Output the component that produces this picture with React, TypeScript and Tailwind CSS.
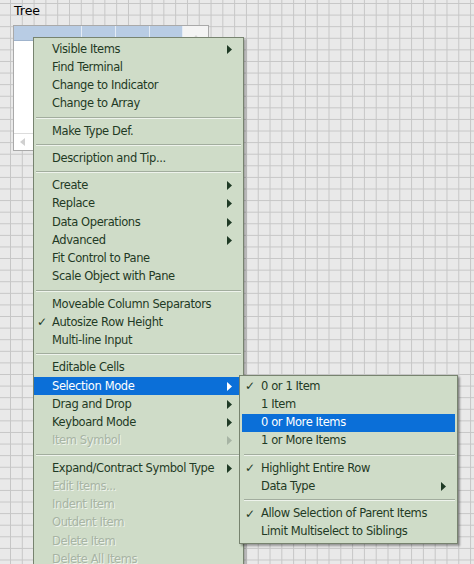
import React from "react";

type MenuEntry =
  | { kind: "sep" }
  | {
      kind: "item";
      label: string;
      checked?: boolean;
      submenu?: boolean;
      disabled?: boolean;
      active?: boolean;
    };

const item = (label: string, opts: Partial<Omit<Extract<MenuEntry, { kind: "item" }>, "kind" | "label">> = {}): MenuEntry => ({
  kind: "item",
  label,
  ...opts,
});
const sep: MenuEntry = { kind: "sep" };

const mainMenu: MenuEntry[] = [
  item("Visible Items", { submenu: true }),
  item("Find Terminal"),
  item("Change to Indicator"),
  item("Change to Array"),
  sep,
  item("Make Type Def."),
  sep,
  item("Description and Tip..."),
  sep,
  item("Create", { submenu: true }),
  item("Replace", { submenu: true }),
  item("Data Operations", { submenu: true }),
  item("Advanced", { submenu: true }),
  item("Fit Control to Pane"),
  item("Scale Object with Pane"),
  sep,
  item("Moveable Column Separators"),
  item("Autosize Row Height", { checked: true }),
  item("Multi-line Input"),
  sep,
  item("Editable Cells"),
  item("Selection Mode", { submenu: true, active: true }),
  item("Drag and Drop", { submenu: true }),
  item("Keyboard Mode", { submenu: true }),
  item("Item Symbol", { submenu: true, disabled: true }),
  sep,
  item("Expand/Contract Symbol Type", { submenu: true }),
  item("Edit Items...", { disabled: true }),
  item("Indent Item", { disabled: true }),
  item("Outdent Item", { disabled: true }),
  item("Delete Item", { disabled: true }),
  item("Delete All Items", { disabled: true }),
];

const selectionMenu: MenuEntry[] = [
  item("0 or 1 Item", { checked: true }),
  item("1 Item"),
  item("0 or More Items", { active: true }),
  item("1 or More Items"),
  sep,
  item("Highlight Entire Row", { checked: true }),
  item("Data Type", { submenu: true }),
  sep,
  item("Allow Selection of Parent Items", { checked: true }),
  item("Limit Multiselect to Siblings"),
];

const Arrow = ({ color }: { color: string }) => (
  <svg width="5" height="9" viewBox="0 0 5 9" className="block">
    <path d="M0 0 L5 4.5 L0 9 Z" fill={color} />
  </svg>
);

const MenuList = ({ entries, textPad, checkPad }: { entries: MenuEntry[]; textPad: string; checkPad: string }) => (
  <>
    {entries.map((e, i) => {
      if (e.kind === "sep") {
        return (
          <div key={i} className="h-[9px] flex items-center px-[2px]">
            <div className="w-full border-t border-t-[#a2ad9e] border-b border-b-[#eef3ec]" />
          </div>
        );
      }
      const textColor = e.active
        ? "text-white"
        : e.disabled
        ? "text-[#a7b4a4] [text-shadow:1px_1px_0_#eef3ec]"
        : "text-[#1f3a25]";
      const arrowColor = e.active ? "#ffffff" : e.disabled ? "#a7b4a4" : "#1f3a25";
      return (
        <div
          key={i}
          className={`relative h-[18.25px] flex items-center mr-[2px] ${e.active ? "bg-[#0b6fd8]" : ""} ${textColor}`}
        >
          {e.checked && <span className={`absolute ${checkPad} text-[12px] leading-none tracking-normal`}>✓</span>}
          <span className={`${textPad} whitespace-nowrap`}>{e.label}</span>
          {e.submenu && (
            <span className="ml-auto mr-[9px]">
              <Arrow color={arrowColor} />
            </span>
          )}
        </div>
      );
    })}
  </>
);

export default function App() {
  return (
    <div className="relative w-[474px] h-[564px] overflow-hidden bg-[#e9e9e9] bg-[linear-gradient(to_right,#c6c6c6_1px,transparent_1px),linear-gradient(to_bottom,#c6c6c6_1px,transparent_1px)] bg-[size:11.8px_11.6px] bg-[position:10px_3px] font-['DejaVu_Sans',sans-serif] text-[11.5px] tracking-[-0.4px]">
      {/* tree control on the front panel */}
      <div className="absolute left-[14px] top-[5px] text-black text-[12.5px] leading-none tracking-normal">Tree</div>
      <div className="absolute left-[13px] top-[25px] w-[196px] h-[126px] bg-white border border-[#a9a9a9] flex flex-col">
        <div className="flex h-[15px] border-b border-[#9fb3cc]">
          <div className="w-[68px] bg-[#b8cce4] border-r border-[#e4ecf6]" />
          <div className="w-[34px] bg-[#b8cce4] border-r border-[#e4ecf6]" />
          <div className="w-[34px] bg-[#b8cce4] border-r border-[#e4ecf6]" />
          <div className="w-[33px] bg-[#b8cce4] border-r border-[#e4ecf6]" />
          <div className="flex-1 bg-[#f4f4f4] flex items-end justify-center">
            <svg width="8" height="5" viewBox="0 0 8 5">
              <path d="M0 5 L4 0 L8 5 Z" fill="#d6d6d6" />
            </svg>
          </div>
        </div>
        <div className="flex-1" />
        <div className="h-[17px] border-t border-[#dcdcdc] flex items-center pl-[6px]">
          <svg width="5" height="8" viewBox="0 0 5 8">
            <path d="M5 0 L0 4 L5 8 Z" fill="#d0d0d0" />
          </svg>
        </div>
      </div>

      {/* shortcut menu */}
      <div className="absolute left-[33px] top-[37px] w-[211px] pt-[2px] pb-[2px] bg-[#cfdcc8] border border-[#77836f] shadow-[2px_2px_2px_rgba(0,0,0,0.3)]">
        <MenuList entries={mainMenu} textPad="pl-[18px]" checkPad="left-[3px]" />
      </div>

      {/* Selection Mode submenu */}
      <div className="absolute left-[239px] top-[375px] w-[219px] pt-[1px] pb-[2px] pl-[2px] bg-[#cfdcc8] border border-[#77836f] shadow-[2px_2px_2px_rgba(0,0,0,0.35)]">
        <MenuList entries={selectionMenu} textPad="pl-[19px]" checkPad="left-[3px]" />
      </div>
    </div>
  );
}
